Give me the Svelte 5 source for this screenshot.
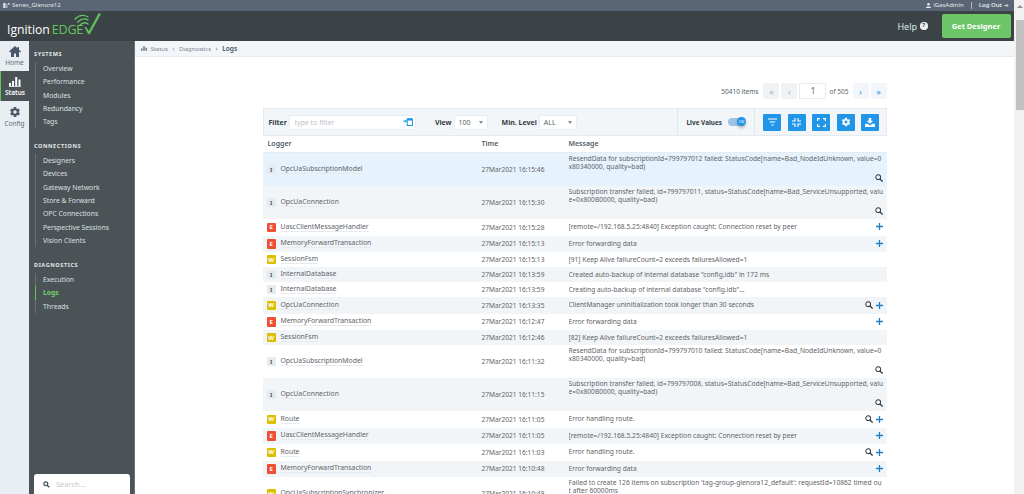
<script>
  const groups = [
    { title: 'SYSTEMS', items: ['Overview', 'Performance', 'Modules', 'Redundancy', 'Tags'] },
    { title: 'CONNECTIONS', items: ['Designers', 'Devices', 'Gateway Network', 'Store & Forward', 'OPC Connections', 'Perspective Sessions', 'Vision Clients'] },
    { title: 'DIAGNOSTICS', items: ['Execution', 'Logs', 'Threads'] }
  ];
  const sub1 = 'ResendData for subscriptionId=';
  const rows = [
    { l: 'I', n: 'OpcUaSubscriptionModel', t: '27Mar2021 16:15:46', m: sub1 + '799797012 failed: StatusCode[name=Bad_NodeIdUnknown, value=0\nx80340000, quality=bad)', multi: 1, s: 1, sel: 1 },
    { l: 'I', n: 'OpcUaConnection', t: '27Mar2021 16:15:30', m: 'Subscription transfer failed, id=799797011, status=StatusCode[name=Bad_ServiceUnsupported, valu\ne=0x800B0000, quality=bad)', multi: 1, s: 1 },
    { l: 'E', n: 'UascClientMessageHandler', t: '27Mar2021 16:15:28', m: '[remote=/192.168.5.25:4840] Exception caught: Connection reset by peer', p: 1 },
    { l: 'E', n: 'MemoryForwardTransaction', t: '27Mar2021 16:15:13', m: 'Error forwarding data', p: 1 },
    { l: 'W', n: 'SessionFsm', t: '27Mar2021 16:15:13', m: '[91] Keep Alive failureCount=2 exceeds failuresAllowed=1' },
    { l: 'I', n: 'InternalDatabase', t: '27Mar2021 16:13:59', m: 'Created auto-backup of internal database "config.idb" in 172 ms' },
    { l: 'I', n: 'InternalDatabase', t: '27Mar2021 16:13:59', m: 'Creating auto-backup of internal database "config.idb"...' },
    { l: 'W', n: 'OpcUaConnection', t: '27Mar2021 16:13:35', m: 'ClientManager uninitialization took longer than 30 seconds', s: 1, p: 1 },
    { l: 'E', n: 'MemoryForwardTransaction', t: '27Mar2021 16:12:47', m: 'Error forwarding data', p: 1 },
    { l: 'W', n: 'SessionFsm', t: '27Mar2021 16:12:46', m: '[82] Keep Alive failureCount=2 exceeds failuresAllowed=1' },
    { l: 'I', n: 'OpcUaSubscriptionModel', t: '27Mar2021 16:11:32', m: sub1 + '799797010 failed: StatusCode[name=Bad_NodeIdUnknown, value=0\nx80340000, quality=bad)', multi: 1, s: 1 },
    { l: 'I', n: 'OpcUaConnection', t: '27Mar2021 16:11:15', m: 'Subscription transfer failed, id=799797008, status=StatusCode[name=Bad_ServiceUnsupported, valu\ne=0x800B0000, quality=bad)', multi: 1, s: 1 },
    { l: 'W', n: 'Route', t: '27Mar2021 16:11:05', m: 'Error handling route.', s: 1, p: 1 },
    { l: 'E', n: 'UascClientMessageHandler', t: '27Mar2021 16:11:05', m: '[remote=/192.168.5.25:4840] Exception caught: Connection reset by peer', p: 1 },
    { l: 'W', n: 'Route', t: '27Mar2021 16:11:03', m: 'Error handling route.', s: 1, p: 1 },
    { l: 'E', n: 'MemoryForwardTransaction', t: '27Mar2021 16:10:48', m: 'Error forwarding data', p: 1 },
    { l: 'W', n: 'OpcUaSubscriptionSynchronizer', t: '27Mar2021 16:10:48', m: "Failed to create 126 items on subscription 'tag-group-glenora12_default': requestId=10862 timed ou\nt after 60000ms", multi: 1, s: 1 }
  ];
</script>

<div class="page">
  <div class="shell">
    <div class="topbar">
      <span class="site">
        <svg class="siteicon" viewBox="0 0 8 6"><path d="M0 0h3v6H0zM4 1h1v5H4zM6 0h2v2H6v4" fill="#d5dbe2"/></svg>
        Senex_Glenora12
      </span>
      <span class="user">
        <svg class="usericon" viewBox="0 0 8 8"><circle cx="4" cy="2" r="2" fill="#e8ecf0"/><path d="M0 8c0-3 8-3 8 0z" fill="#e8ecf0"/></svg>
        iGasAdmin
        <i class="sep"></i>
        <span class="logout">Log Out</span>
        <svg class="logouticon" viewBox="0 0 8 8"><path d="M0 4h6M4 1.500 6.500 4 4 6.500" fill="none" stroke="#e8ecf0" stroke-width="1.200"/></svg>
      </span>
    </div>

    <header class="header">
      <div class="logo">
        <span class="ign">Ignition</span><span class="edge">EDGE</span>
        <svg class="mark" viewBox="0 0 30 24" width="30" height="24">
          <g fill="none" stroke="#62c65c" stroke-linecap="round">
            <path d="M3 6Q9 0 16 4" stroke-width="1.400"/>
            <path d="M5.700 9Q11 4 16 7" stroke-width="1.400"/>
            <path d="M8 12Q12 8 16 11" stroke-width="1.400"/>
          </g>
          <path d="M28.500 1 17.500 21 16 20.500 26.800 .5z" fill="#62c65c" stroke="#62c65c" stroke-width=".6"/>
          <path d="M12.500 14 16 20.800 17.500 19 14 14z" fill="#62c65c"/>
        </svg>
      </div>
      <div class="headright">
        <span class="help">Help</span>
        <span class="helpicon">?</span>
        <button class="designer">Get Designer</button>
      </div>
    </header>

    <div class="body">
      <nav class="rail">
        <a class="tile">
          <svg viewBox="0 0 12 11" width="12" height="11"><path d="M6 0 0 5.500 1 6.500 2 5.600V11H5V7.500H7V11H10V5.600L11 6.500 12 5.500 10 3.700V1H8.500V2.300z" fill="#49576a"/></svg>
          <span>Home</span>
        </a>
        <a class="tile active">
          <svg viewBox="0 0 12 11" width="12" height="11"><path d="M0 7h2v3H0zM3 5h2v5H3zM6.200 1h2v9h-2zM9.500 3.500h2V10h-2zM0 10.200h12v.8H0z" fill="#fff"/></svg>
          <span>Status</span>
        </a>
        <a class="tile">
          <svg viewBox="0 0 24 24" width="12" height="12"><path fill="#49576a" d="M19.400 13a7.500 7.500 0 0 0 0-2l2.100-1.600a.5.500 0 0 0 .1-.6l-2-3.500a.5.500 0 0 0-.6-.2l-2.500 1a7.300 7.300 0 0 0-1.700-1l-.4-2.700a.5.500 0 0 0-.5-.4h-4a.5.500 0 0 0-.5.400l-.4 2.700a7.300 7.300 0 0 0-1.700 1l-2.500-1a.5.500 0 0 0-.6.200l-2 3.500a.5.500 0 0 0 .1.600L4.600 11a7.500 7.500 0 0 0 0 2l-2.100 1.600a.5.500 0 0 0-.1.600l2 3.500a.5.500 0 0 0 .6.200l2.500-1a7.300 7.300 0 0 0 1.700 1l.4 2.700a.5.500 0 0 0 .5.400h4a.5.500 0 0 0 .5-.4l.4-2.700a7.300 7.300 0 0 0 1.700-1l2.500 1a.5.500 0 0 0 .6-.2l2-3.500a.5.500 0 0 0-.1-.6zM12 15.500a3.500 3.500 0 1 1 0-7 3.500 3.500 0 0 1 0 7z"/></svg>
          <span>Config</span>
        </a>
      </nav>

      <aside class="side">
        {#each groups as g}
          <div class="gtitle">{g.title}</div>
          <ul class="glist">
            {#each g.items as it}
              <li class:cur={it === 'Logs'}>{it}</li>
            {/each}
          </ul>
        {/each}
        <div class="search">
          <svg viewBox="0 0 10 10" width="7" height="7"><circle cx="4" cy="4" r="2.800" fill="none" stroke="#3d4a58" stroke-width="1.600"/><path d="M6 6l3 3" stroke="#3d4a58" stroke-width="1.800"/></svg>
          <span>Search...</span>
        </div>
      </aside>

      <main class="main">
        <div class="crumbs">
          <svg viewBox="0 0 8 6" width="6" height="5"><path d="M0 3h2v3H0zM3 0h2v6H3zM6 2h2v4H6z" fill="#6b7785"/></svg>
          <span>Status</span><em>›</em><span>Diagnostics</span><em>›</em><b>Logs</b>
        </div>
        <div class="content">
          <div class="pager">
            <span class="count">50410 items</span>
            <span class="pg off">«</span>
            <span class="pg off">‹</span>
            <span class="pnum">1</span>
            <span class="of">of 505</span>
            <span class="pg on">›</span>
            <span class="pg on">»</span>
          </div>

          <div class="toolbar">
            <div class="filters">
              <label class="lbl first">Filter</label>
              <div class="finput">
                <span>type to filter</span>
                <svg viewBox="0 0 12 10" width="10" height="8"><path d="M0 4h4M2 2.500 4 4 2 5.500" fill="none" stroke="#2196e8" stroke-width="1.200"/><path d="M5 1h6.500v8.500H5z" fill="none" stroke="#2196e8" stroke-width="1.300"/><path d="M5 1h6.500v2.200H5z" fill="#2196e8"/></svg>
              </div>
              <label class="lbl view">View</label>
              <div class="picker s1"><span>100</span><i></i></div>
              <label class="lbl level">Min. Level</label>
              <div class="picker s2"><span>ALL</span><i></i></div>
            </div>
            <div class="live">
              <span class="lbl">Live Values</span>
              <span class="switch"><span class="knob">ON</span></span>
            </div>
            <div class="tools">
              <button class="tool" aria-label="filter"><svg viewBox="0 0 12 10" width="9" height="8"><path d="M0 1h12M2.500 5h7M4.500 9h3" stroke="#fff" stroke-width="1.500"/></svg></button>
              <button class="tool" aria-label="collapse"><svg viewBox="0 0 12 12" width="9" height="9"><path d="M4 0v4H0M8 0v4h4M4 12V8H0M8 12V8h4" fill="none" stroke="#fff" stroke-width="1.500"/></svg></button>
              <button class="tool" aria-label="expand"><svg viewBox="0 0 12 12" width="9" height="9"><path d="M.8 4V.8H4M8 .8h3.200V4M.8 8v3.200H4M8 11.200h3.200V8" fill="none" stroke="#fff" stroke-width="1.500"/></svg></button>
              <button class="tool" aria-label="settings"><svg viewBox="0 0 24 24" width="10" height="10"><path fill="#fff" d="M19.400 13a7.500 7.500 0 0 0 0-2l2.100-1.600a.5.500 0 0 0 .1-.6l-2-3.500a.5.500 0 0 0-.6-.2l-2.500 1a7.300 7.300 0 0 0-1.700-1l-.4-2.700a.5.500 0 0 0-.5-.4h-4a.5.500 0 0 0-.5.400l-.4 2.700a7.300 7.300 0 0 0-1.700 1l-2.500-1a.5.500 0 0 0-.6.200l-2 3.500a.5.500 0 0 0 .1.600L4.600 11a7.500 7.500 0 0 0 0 2l-2.100 1.600a.5.500 0 0 0-.1.600l2 3.500a.5.500 0 0 0 .6.200l2.500-1a7.300 7.300 0 0 0 1.700 1l.4 2.700a.5.500 0 0 0 .5.400h4a.5.500 0 0 0 .5-.4l.4-2.700a7.300 7.300 0 0 0 1.700-1l2.500 1a.5.500 0 0 0 .6-.2l2-3.500a.5.500 0 0 0-.1-.6zM12 15.500a3.500 3.500 0 1 1 0-7 3.500 3.500 0 0 1 0 7z"/></svg></button>
              <button class="tool" aria-label="download"><svg viewBox="0 0 12 11" width="10" height="9"><path d="M4.500 0h3v3.500H10L6 7 2 3.500h2.500zM0 7h3l3 2.200L9 7h3v4H0z" fill="#fff"/></svg></button>
            </div>
          </div>

          <div class="thead"><span>Logger</span><span>Time</span><span>Message</span></div>
          {#each rows as r}
            <div class="row" class:multi={r.multi} class:selected={r.sel} class:act={r.p}>
              <div class="logger"><span class="badge {r.l}">{r.l}</span><span class="name">{r.n}</span></div>
              <div class="time">{r.t}</div>
              <div class="msg">{r.m}</div>
              <div class="acts">
                {#if r.s}<svg class="mag" viewBox="0 0 10 10" width="8" height="8"><circle cx="4" cy="4" r="3" fill="none" stroke="#333a42" stroke-width="1.300"/><path d="M6.200 6.200 9.500 9.500" stroke="#333a42" stroke-width="1.600"/></svg>{/if}
                {#if r.p}<svg class="plus" viewBox="0 0 8 8" width="7" height="7"><path d="M4 0v8M0 4h8" stroke="#1f7fc6" stroke-width="1.500"/></svg>{/if}
              </div>
            </div>
          {/each}
        </div>
      </main>

      <div class="scroll"><div class="arrow"></div><div class="thumb"></div></div>
    </div>
  </div>
</div>

<style>
  :global(body) { margin: 0; background: #fff; }
  .page { height: 494px; width: 1024px; overflow: hidden; font-family: "Noto Sans", "Open Sans", sans-serif; font-size: 7px; color: #5f6368; }
  .shell { display: flex; flex-direction: column; height: 494px; }
  .topbar { height: 11px; flex: none; background: #5a6575; display: flex; justify-content: space-between; align-items: center; padding: 0 15px 0 3px; color: #e2e6ea; font-size: 6px; line-height: 11px; }
  .site, .user { display: flex; align-items: center; gap: 2px; }
  .siteicon { width: 7px; height: 5px; }
  .usericon { width: 5px; height: 5px; }
  .logouticon { width: 5px; height: 5px; }
  .sep { width: 1px; height: 7px; background: #aeb6bf; margin: 0 5px; }
  .logout { font-weight: 600; }
  .header { height: 30px; flex: none; background: #3c4346; display: flex; justify-content: space-between; align-items: center; padding: 0 13.500px 0 7px; }
  .logo { display: flex; align-items: center; height: 30px; position: relative; font-family: "Open Sans", sans-serif; line-height: 30px; padding-top: 7px; box-sizing: border-box; }
  .ign { color: #fff; font-weight: 400; font-size: 12.200px; }
  .edge { color: #62c65c; font-weight: 400; font-size: 12.500px; margin-left: 2px; letter-spacing: -.2px; }
  .mark { position: absolute; left: 65px; top: 2px; }
  .headright { display: flex; align-items: center; }
  .help { color: #dfe3e6; font-size: 9px; }
  .helpicon { width: 7.500px; height: 7.500px; border-radius: 50%; background: #eef0f2; color: #3c4346; font-size: 6px; line-height: 7.500px; font-weight: 700; text-align: center; margin: 0 14px 0 3px; }
  .designer { width: 69px; height: 24px; background: #6cc566; color: #fff; border: 0; border-radius: 2px; padding: 0; font: 700 7.500px "Noto Sans", sans-serif; }
  .body { flex: 1; display: flex; min-height: 0; }
  .rail { width: 29px; flex: none; background: #e9eef2; }
  .tile { height: 30px; display: flex; flex-direction: column; align-items: center; padding-top: 5px; box-sizing: border-box; gap: 2px; color: #5f6a75; font-size: 6.500px; line-height: 8px; }
  .tile.active { background: #4b5357; color: #fff; font-weight: 600; border-left: 1px solid #62c65c; }
  .side { width: 106px; flex: none; background: #4b5357; border-right: 1px solid #6b7376; box-sizing: border-box; padding: 9px 5px 0 5px; position: relative; color: #dde0e2; }
  .gtitle { font-size: 5.500px; font-weight: 700; letter-spacing: .6px; line-height: 8px; color: #e6e8ea; }
  .glist { list-style: none; margin: 4px 0 13.700px 1px; padding: 0; }
  .glist li { height: 13.300px; line-height: 13.300px; padding-left: 7px; border-left: 1px solid #687074; font-size: 6.800px; }
  .glist li.cur { color: #6fd268; font-weight: 700; border-left-color: #62c65c; }
  .search { position: absolute; left: 5px; bottom: 0; width: 96px; height: 20px; background: #fff; border-radius: 3px 3px 0 0; display: flex; align-items: center; gap: 6px; padding-left: 9px; box-sizing: border-box; color: #c4c8cc; font-size: 7.500px; }
  .main { flex: 1; min-width: 0; overflow: hidden; }
  .crumbs { height: 16px; background: #f3f6f9; border-bottom: 1px solid #e6ebef; display: flex; align-items: center; gap: 3.500px; padding-left: 6px; box-sizing: border-box; font-size: 5.900px; color: #79838e; }
  .crumbs em { font-style: normal; margin: 0 1px; font-size: 7px; }
  .crumbs b { color: #454f5a; font-weight: 600; font-size: 6.600px; }
  .content { width: 624px; margin: 26px auto 0; }
  .pager { height: 16px; display: flex; align-items: center; justify-content: flex-end; gap: 2px; margin-bottom: 9px; }
  .count { margin-right: 3px; color: #555f69; font-size: 6.500px; }
  .pg { width: 16px; height: 16px; display: flex; align-items: center; justify-content: center; font-size: 9px; border-radius: 2px; }
  .pg.off { background: #f1f2f3; color: #aab0b6; }
  .pg.on { background: #f2f6fa; color: #2196e8; }
  .pnum { width: 27px; height: 16px; border: 1px solid #e6ebf0; box-sizing: border-box; text-align: center; line-height: 14px; font-size: 8px; }
  .of { margin: 0 2px 0 1px; font-size: 6.500px; }
  .toolbar { height: 28px; box-sizing: border-box; background: #f2f6f9; border: 1px solid #e4eaef; display: flex; align-items: stretch; }
  .lbl { font-weight: 700; color: #333b44; font-size: 7px; white-space: nowrap; }
  .filters { flex: 1; display: flex; align-items: center; padding-left: 5px; }
  .finput { width: 127px; height: 15px; background: #fff; border: 1px solid #e8edf1; box-sizing: border-box; margin-left: 2.500px; display: flex; justify-content: space-between; align-items: center; padding: 0 2px 0 4px; color: #c0c5ca; }
  .view { margin-left: 18.500px; }
  .picker { height: 15px; background: #fff; border: 1px solid #e8edf1; box-sizing: border-box; margin-left: 2px; display: flex; align-items: center; justify-content: space-between; padding: 0 4px; color: #555f69; }
  .picker i { width: 0; height: 0; border: 2px solid transparent; border-top: 3px solid #858e97; border-bottom: 0; }
  .s1 { width: 34px; }
  .s2 { width: 38px; }
  .level { margin-left: 14px; }
  .live { width: 78px; flex: none; display: flex; align-items: center; gap: 6px; padding-left: 9px; box-sizing: border-box; border-left: 1px solid #e0e6eb; border-right: 1px solid #e0e6eb; }
  .live .lbl { font-size: 6.400px; }
  .switch { width: 17px; height: 8px; background: #9cc4e6; border-radius: 4px; position: relative; display: block; }
  .knob { position: absolute; right: -1px; top: -1px; width: 9px; height: 9px; border-radius: 50%; background: #2196e8; color: #fff; font-size: 3.500px; line-height: 9px; text-align: center; box-shadow: 0 2px 3px rgba(0,0,0,.25); }
  .tools { width: 131px; flex: none; display: flex; align-items: center; gap: 6.500px; padding-left: 8.500px; box-sizing: border-box; }
  .tool { width: 18px; height: 17px; background: #2196e8; border: 0; padding: 0; border-radius: 1px; display: flex; align-items: center; justify-content: center; }
  .thead { height: 17px; display: grid; grid-template-columns: 214px 87px 1fr; padding-left: 5px; box-sizing: border-box; border-bottom: 1.500px solid #e6ebf0; color: #515c68; font-weight: 600; font-size: 7px; line-height: 16px; }
  .row { display: grid; grid-template-columns: 219px 87px 318px; position: relative; min-height: 15px; align-items: center; }
  .row.act { min-height: 16.500px; }
  .row.multi { min-height: 33px; }
  .row:nth-of-type(odd) { background: #f2f5f8; }
  .row.selected { background: #e6f3fc; }
  .logger { display: flex; align-items: center; padding-left: 4px; }
  .badge { width: 9.500px; height: 9.500px; flex: none; display: flex; align-items: center; justify-content: center; font-size: 6px; font-weight: 700; line-height: 1; border-radius: 1px; margin-right: 4.500px; }
  .badge.I { background: #e6ebf0; color: #555f69; }
  .badge.E { background: #ee5033; color: #fff; }
  .badge.W { background: #dcc000; color: #fff; }
  .name { border-bottom: 1px solid #e6ebf0; line-height: 8px; color: #5f6368; font-size: 6.850px; }
  .time { color: #5f6368; font-size: 6.600px; }
  .msg { white-space: pre; overflow: hidden; color: #5f6368; font-size: 6.700px; line-height: 8px; }
  .multi .msg { align-self: start; padding-top: 1.500px; }
  .acts { position: absolute; right: 3.500px; bottom: 4px; display: flex; align-items: center; gap: 3px; }
  .act .acts { bottom: auto; top: 4px; }
  .scroll { width: 10px; flex: none; background: #f1f1f1; margin-top: -41px; height: 494px; box-sizing: border-box; padding-left: 2px; position: relative; z-index: 2; }
  .arrow { height: 15px; }
  .arrow::before { content: ""; display: block; width: 0; height: 0; margin: 5px 0 0 1px; border: 3px solid transparent; border-bottom: 3px solid #8f8f8f; border-top: 0; }
  .thumb { height: 90px; background: #c1c1c1; }
</style>
